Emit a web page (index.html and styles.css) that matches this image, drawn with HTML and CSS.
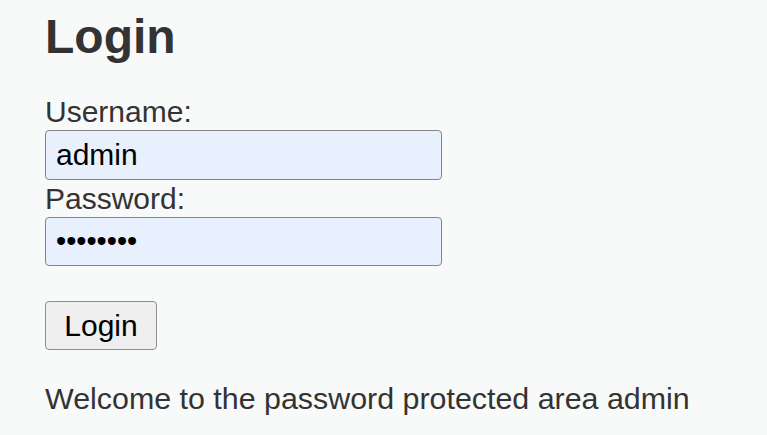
FILE: index.html
```html
<!DOCTYPE html>
<html>
<head>
<meta charset="utf-8">
<title>Login</title>
<link rel="stylesheet" href="styles.css">
</head>
<body>
<main class="page">
  <h1 class="title">Login</h1>
  <form class="login-form">
    <label class="field-label" for="username">Username:</label>
    <input class="field-input" id="username" type="text" value="admin">
    <label class="field-label" for="password">Password:</label>
    <input class="field-input field-input--password" id="password" type="password" value="password">
    <button class="submit-btn" type="button">Login</button>
  </form>
  <p class="welcome">Welcome to the password protected area admin</p>
</main>
</body>
</html>
```

FILE: styles.css
```css
html, body {
  margin: 0;
  padding: 0;
  background: #f8f9f9;
}

body {
  font-family: "Liberation Sans", Arial, sans-serif;
  color: #333333;
}

.page {
  display: flex;
  flex-direction: column;
  align-items: flex-start;
  padding: 9px 0 0 45px;
}

.title {
  margin: 0;
  font-size: 48px;
  font-weight: bold;
  line-height: normal;
  color: #333333;
}

.login-form {
  display: flex;
  flex-direction: column;
  align-items: flex-start;
  margin-top: 29px;
}

.field-label {
  display: block;
  font-size: 30px;
  line-height: 37px;
  color: #333333;
}

.field-input {
  display: block;
  box-sizing: border-box;
  width: 397px;
  height: 50px;
  margin: 0;
  padding: 0 10px;
  border: 1px solid #858585;
  border-radius: 4px;
  background: #e8f0fe;
  color: #000000;
  font-family: "Liberation Sans", Arial, sans-serif;
  font-size: 30px;
  outline: none;
}

.field-input--password {
  height: 49px;
  font-size: 29px;
}

.submit-btn {
  box-sizing: border-box;
  width: 112px;
  height: 49px;
  margin-top: 35px;
  padding: 0;
  border: 1px solid #8f8f8f;
  border-radius: 4px;
  background: #efefef;
  color: #000000;
  font-family: "Liberation Sans", Arial, sans-serif;
  font-size: 30px;
}

.welcome {
  margin: 31px 0 0 0;
  font-size: 30.4px;
  line-height: normal;
  color: #333333;
}
```
